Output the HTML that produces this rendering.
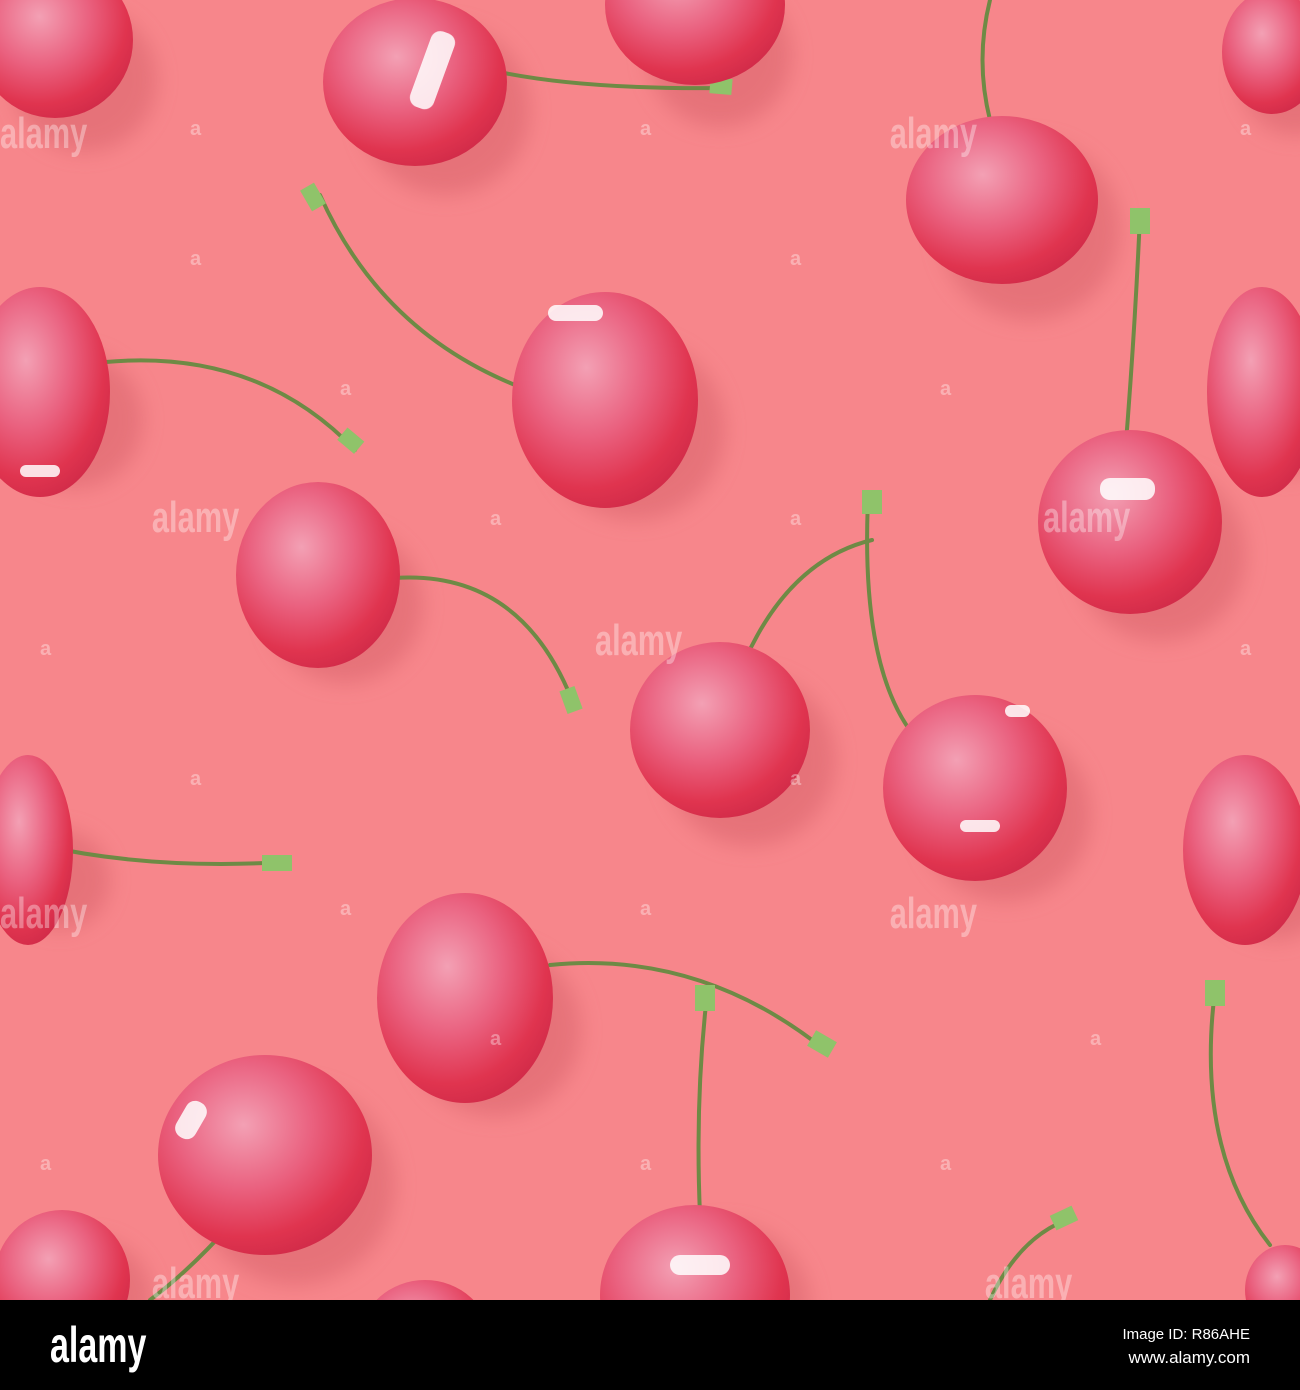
<!DOCTYPE html>
<html><head><style>
html,body{margin:0;padding:0;width:1300px;height:1390px;overflow:hidden;background:#000}
svg{display:block}
.wm{font-family:"Liberation Sans",sans-serif;font-weight:bold;fill:#fff;opacity:.35}
</style></head><body>
<svg width="1300" height="1390" viewBox="0 0 1300 1390" xmlns="http://www.w3.org/2000/svg">
<defs>
<radialGradient id="c" cx="40%" cy="35%" r="70%">
<stop offset="0" stop-color="#f3a0b4"/>
<stop offset="0.45" stop-color="#ea6280"/>
<stop offset="0.8" stop-color="#e0344f"/>
<stop offset="1" stop-color="#d02a48"/>
</radialGradient>
<filter id="sh" x="-50%" y="-50%" width="200%" height="200%"><feGaussianBlur stdDeviation="10"/></filter>
<clipPath id="cl"><rect width="1300" height="1300"/></clipPath>
</defs>
<rect width="1300" height="1300" fill="#f7868b"/>
<g clip-path="url(#cl)">
<g fill="#d9646c" opacity=".55" filter="url(#sh)">
<circle cx="85" cy="80" r="72"/><circle cx="445" cy="110" r="85"/><circle cx="720" cy="55" r="72"/>
<circle cx="1030" cy="230" r="90"/><circle cx="1295" cy="80" r="55"/><circle cx="75" cy="420" r="68"/>
<circle cx="635" cy="430" r="90"/><circle cx="345" cy="605" r="78"/><circle cx="1160" cy="555" r="86"/>
<circle cx="1285" cy="420" r="55"/><circle cx="750" cy="760" r="86"/><circle cx="1005" cy="815" r="86"/>
<circle cx="60" cy="880" r="50"/><circle cx="1275" cy="880" r="60"/><circle cx="495" cy="1030" r="86"/>
<circle cx="295" cy="1185" r="100"/><circle cx="725" cy="1310" r="86"/><circle cx="90" cy="1300" r="62"/>
</g>
<g stroke="#6e8a45" stroke-width="4" fill="none" stroke-linecap="round">
<path d="M470 65 Q560 90 725 88"/>
<path d="M990 120 Q975 60 990 0"/>
<path d="M80 365 Q250 340 355 450"/>
<path d="M515 385 Q380 330 320 195"/>
<path d="M395 578 Q520 570 572 700"/>
<path d="M1125 455 Q1135 330 1140 215"/>
<path d="M745 660 Q790 560 872 540"/>
<path d="M922 745 Q860 680 868 500"/>
<path d="M40 845 Q150 870 285 862"/>
<path d="M550 965 Q700 950 825 1050"/>
<path d="M230 1225 Q190 1270 150 1300"/>
<path d="M700 1215 Q695 1100 707 995"/>
<path d="M1270 1245 Q1195 1150 1215 990"/>
<path d="M990 1300 Q1020 1235 1072 1218"/>
</g>
<g fill="#8fc36a">
<rect x="710" y="78" width="22" height="16" transform="rotate(5 720 86)"/>
<rect x="305" y="185" width="16" height="24" transform="rotate(-30 313 197)"/>
<rect x="340" y="432" width="22" height="16" transform="rotate(40 350 440)"/>
<rect x="563" y="688" width="16" height="24" transform="rotate(-20 571 700)"/>
<rect x="1130" y="208" width="20" height="26"/>
<rect x="862" y="490" width="20" height="24"/>
<rect x="262" y="855" width="30" height="16"/>
<rect x="810" y="1035" width="24" height="18" transform="rotate(30 822 1044)"/>
<rect x="695" y="985" width="20" height="26"/>
<rect x="1205" y="980" width="20" height="26"/>
<rect x="1052" y="1210" width="24" height="16" transform="rotate(-25 1064 1218)"/>
</g>
<g fill="url(#c)">
<ellipse cx="55" cy="40" rx="78" ry="78"/>
<ellipse cx="415" cy="82" rx="92" ry="84"/>
<ellipse cx="695" cy="5" rx="90" ry="80"/>
<ellipse cx="1002" cy="200" rx="96" ry="84"/>
<ellipse cx="1272" cy="52" rx="50" ry="62"/>
<ellipse cx="40" cy="392" rx="70" ry="105"/>
<ellipse cx="605" cy="400" rx="93" ry="108"/>
<ellipse cx="318" cy="575" rx="82" ry="93"/>
<ellipse cx="1130" cy="522" rx="92" ry="92"/>
<ellipse cx="1262" cy="392" rx="55" ry="105"/>
<ellipse cx="720" cy="730" rx="90" ry="88"/>
<ellipse cx="975" cy="788" rx="92" ry="93"/>
<ellipse cx="28" cy="850" rx="45" ry="95"/>
<ellipse cx="1245" cy="850" rx="62" ry="95"/>
<ellipse cx="465" cy="998" rx="88" ry="105"/>
<ellipse cx="265" cy="1155" rx="107" ry="100"/>
<ellipse cx="695" cy="1295" rx="95" ry="90"/>
<ellipse cx="62" cy="1280" rx="68" ry="70"/>
<ellipse cx="425" cy="1340" rx="65" ry="60"/>
<ellipse cx="1285" cy="1290" rx="40" ry="45"/>
</g>
<g fill="#fff" opacity=".85">
<rect x="548" y="305" width="55" height="16" rx="8"/>
<rect x="420" y="30" width="25" height="80" rx="10" transform="rotate(20 432 70)"/>
<rect x="1100" y="478" width="55" height="22" rx="10"/>
<rect x="180" y="1100" width="22" height="40" rx="10" transform="rotate(30 191 1120)"/>
<rect x="670" y="1255" width="60" height="20" rx="10"/>
<rect x="20" y="465" width="40" height="12" rx="6"/>
<rect x="960" y="820" width="40" height="12" rx="6"/>
<rect x="1005" y="705" width="25" height="12" rx="6"/>
</g>
</g>
<g class="wm" font-size="44" transform="scale(0.7 1)">
<text x="0" y="148">alamy</text>
<text x="1271" y="148">alamy</text>
<text x="217" y="532">alamy</text>
<text x="850" y="655">alamy</text>
<text x="1271" y="928">alamy</text>
<text x="0" y="928">alamy</text>
<text x="217" y="1298">alamy</text>
<text x="1407" y="1298">alamy</text>
<text x="1490" y="532">alamy</text>
</g>
<g class="wm" font-size="20">
<text x="190" y="135">a</text><text x="640" y="135">a</text><text x="1240" y="135">a</text>
<text x="190" y="265">a</text><text x="790" y="265">a</text><text x="940" y="395">a</text><text x="340" y="395">a</text>
<text x="40" y="655">a</text><text x="490" y="525">a</text><text x="790" y="525">a</text><text x="1240" y="655">a</text>
<text x="190" y="785">a</text><text x="790" y="785">a</text><text x="340" y="915">a</text><text x="640" y="915">a</text>
<text x="490" y="1045">a</text><text x="1090" y="1045">a</text><text x="40" y="1170">a</text><text x="640" y="1170">a</text><text x="940" y="1170">a</text>
</g>
<rect y="1300" width="1300" height="90" fill="#000"/>
<text x="50" y="1362" font-family="Liberation Sans,sans-serif" font-weight="bold" font-size="50" fill="#fff" transform="translate(50 0) scale(0.68 1) translate(-50 0)">alamy</text>
<text x="1250" y="1339" text-anchor="end" font-family="Liberation Sans,sans-serif" font-size="15" fill="#fff">Image ID: R86AHE</text>
<text x="1250" y="1363" text-anchor="end" font-family="Liberation Sans,sans-serif" font-size="17" fill="#fff">www.alamy.com</text>
</svg>
</body></html>
